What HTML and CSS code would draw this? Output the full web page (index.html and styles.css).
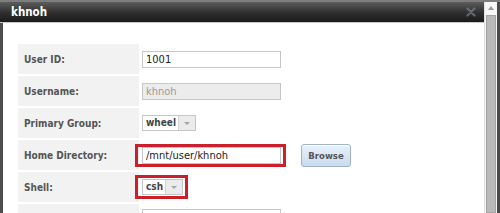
FILE: index.html
```html
<!DOCTYPE html>
<html lang="en">
<head>
    <meta charset="UTF-8">
    <title>Edit User</title>
    <link rel="stylesheet" href="styles.css">
</head>
<body>

<div class="window">
    <div class="dialog">
        <div class="titlebar">
            <span class="title">khnoh</span>
            <svg class="close" width="10" height="10" viewBox="0 0 10 10">
                <path d="M1.5 1.5 L8.5 8.5 M8.5 1.5 L1.5 8.5" stroke="#6f7a80" stroke-width="2.2" stroke-linecap="round"/>
            </svg>
        </div>

        <div class="content">
            <div class="form">
                <div class="label">User ID:</div>
                <div class="value"><input class="field" type="text" value="1001"></div>

                <div class="label">Username:</div>
                <div class="value"><input class="field" type="text" value="khnoh" disabled></div>

                <div class="label">Primary Group:</div>
                <div class="value">
                    <span class="select"><span class="select-text">wheel</span><span class="select-arrow"></span></span>
                </div>

                <div class="label">Home Directory:</div>
                <div class="value">
                    <span class="marked marked-wide"><input class="field" type="text" value="/mnt/user/khnoh"></span>
                    <button class="browse">Browse</button>
                </div>

                <div class="label">Shell:</div>
                <div class="value">
                    <span class="marked"><span class="select"><span class="select-text">csh</span><span class="select-arrow"></span></span></span>
                </div>

                <div class="label"></div>
                <div class="value"><input class="field field-low" type="text" value=""></div>
            </div>
        </div>
    </div>

    <!-- scrollbar -->
    <div class="scrollbar">
        <div class="scroll-up"><span class="scroll-tri"></span></div>
        <div class="scroll-thumb"></div>
    </div>
    <div class="edge"></div>
</div>

</body>
</html>
```

FILE: styles.css
```css
body {
    margin: 0;
    padding: 0;
    width: 500px;
    height: 213px;
    overflow: hidden;
    background: #fff;
    font-family: "DejaVu Sans Condensed", "DejaVu Sans", sans-serif;
}

.window {
    display: flex;
    height: 213px;
    border-top: 2px solid #7d7d7d;
    box-sizing: border-box;
}

.dialog {
    width: 484px;
    display: flex;
    flex-direction: column;
    min-height: 0;
}

/* Title bar */
.titlebar {
    flex-shrink: 0;
    height: 20px;
    display: flex;
    align-items: center;
    justify-content: space-between;
    padding: 0 8px 0 11px;
    background: linear-gradient(#5c5c5c, #2e2e2e 55%, #1b1b1b);
    border-bottom: 1px solid #c9c9c9;
}

.title {
    color: #fff;
    font-weight: bold;
    font-size: 11.5px;
}

.close {
    display: block;
    opacity: 0.8;
}

/* Form */
.content {
    flex: 1;
    min-height: 0;
    overflow: hidden;
    border-left: 3px solid #4e4e4e;
    padding: 21px 0 0 15px;
}

.form {
    display: grid;
    grid-template-columns: 121px 1fr;
    grid-auto-rows: 30px;
    row-gap: 2px;
}

.label {
    background-color: #f2f2f2;
    color: #555;
    font-weight: bold;
    font-size: 10px;
    padding-left: 6px;
    display: flex;
    align-items: center;
}

.value {
    display: flex;
    align-items: center;
    padding-left: 3px;
}

.field {
    width: 139px;
    height: 17px;
    box-sizing: border-box;
    border: 1px solid #c6c6c6;
    padding: 0 3px;
    margin: 0;
    font-family: "DejaVu Sans Condensed", "DejaVu Sans", sans-serif;
    font-size: 11px;
    color: #222;
    background: #fff;
}

.field:disabled {
    background: #ececec;
    color: #999;
}

.field-low {
    align-self: flex-start;
    margin-top: 5px;
}

.select {
    display: inline-flex;
    height: 16px;
    border: 1px solid #c6c6c6;
    box-sizing: border-box;
    background: #fff;
}

.select-text {
    padding: 0 2px 0 3px;
    font-size: 10px;
    font-weight: bold;
    color: #444;
    line-height: 14px;
}

.select-arrow {
    width: 16px;
    border-left: 1px solid #d4d4d4;
    background: #ebebeb;
    position: relative;
}

.select-arrow::after {
    content: "";
    position: absolute;
    left: 5px;
    top: 6px;
    border-left: 3px solid transparent;
    border-right: 3px solid transparent;
    border-top: 3px solid #9aa;
}

/* red annotation boxes */
.marked {
    position: relative;
    display: inline-flex;
}

.marked::after {
    content: "";
    position: absolute;
    left: -7px;
    top: -4px;
    right: -5px;
    bottom: -4px;
    border: 3px solid #c9202c;
}

.marked-wide::after {
    top: -3px;
    bottom: -3px;
}

.browse {
    margin-left: 20px;
    width: 50px;
    height: 23px;
    padding: 0;
    border: 1px solid #9fb3c8;
    border-radius: 3px;
    background: linear-gradient(#e9f1fa, #c9dbef);
    color: #555;
    font-family: "DejaVu Sans Condensed", "DejaVu Sans", sans-serif;
    font-weight: bold;
    font-size: 9.5px;
    box-shadow: inset 0 1px 0 #fff;
}

/* Scrollbar */
.scrollbar {
    width: 13px;
    display: flex;
    flex-direction: column;
    border-left: 1px solid #e2e2e2;
    box-sizing: border-box;
    background: #f4f4f4;
}

.scroll-up {
    height: 13px;
    position: relative;
    background: #f7f7f7;
}

.scroll-tri {
    position: absolute;
    left: 3px;
    top: 4px;
    border-left: 3px solid transparent;
    border-right: 3px solid transparent;
    border-bottom: 4px solid #999;
}

.scroll-thumb {
    flex: 1;
    margin: 0 1px;
    background: #b9b9b9;
    border: 1px solid #a3a3a3;
}

.edge {
    width: 3px;
    background: #4a4a4a;
}
```
